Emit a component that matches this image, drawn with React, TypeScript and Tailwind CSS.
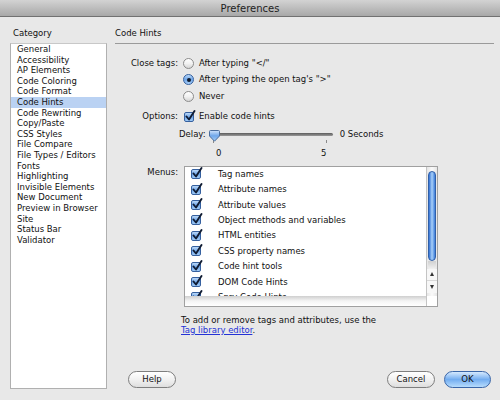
import React from "react";

const categories = [
  "General",
  "Accessibility",
  "AP Elements",
  "Code Coloring",
  "Code Format",
  "Code Hints",
  "Code Rewriting",
  "Copy/Paste",
  "CSS Styles",
  "File Compare",
  "File Types / Editors",
  "Fonts",
  "Highlighting",
  "Invisible Elements",
  "New Document",
  "Preview in Browser",
  "Site",
  "Status Bar",
  "Validator",
];

const menus = [
  "Tag names",
  "Attribute names",
  "Attribute values",
  "Object methods and variables",
  "HTML entities",
  "CSS property names",
  "Code hint tools",
  "DOM Code Hints",
  "Spry Code Hints",
];

function Radio({ on }: { on?: boolean }) {
  if (on) {
    return (
      <div className="w-[11px] h-[11px] rounded-full border border-[#35609f] bg-gradient-to-b from-[#b9d8f8] via-[#6ea5e8] to-[#a9d0f8] flex items-center justify-center shrink-0">
        <div className="w-[4px] h-[4px] rounded-full bg-[#111a2a]" />
      </div>
    );
  }
  return (
    <div className="w-[11px] h-[11px] rounded-full border border-[#8c8c8c] bg-gradient-to-b from-[#ffffff] via-[#f2f2f2] to-[#d6d6d6] shrink-0" />
  );
}

function Check() {
  return (
    <div className="relative w-[10px] h-[10px] rounded-[2px] border border-[#35609f] bg-gradient-to-b from-[#bcd9f8] via-[#6ea5e8] to-[#9fcaf6] shrink-0">
      <svg
        className="absolute left-[0px] top-[-3px]"
        width="11"
        height="12"
        viewBox="0 0 11 12"
      >
        <path
          d="M1.5 6.5 L4 9.5 L9.5 1"
          fill="none"
          stroke="#101c33"
          strokeWidth="1.9"
          strokeLinecap="round"
          strokeLinejoin="round"
        />
      </svg>
    </div>
  );
}

function AquaButton({
  label,
  blue,
  w,
}: {
  label: string;
  blue?: boolean;
  w: string;
}) {
  return (
    <div
      className={
        (blue
          ? "border-[#3a66a8] bg-gradient-to-b from-[#d5e9fd] via-[#73adf0] to-[#b7dcfc] "
          : "border-[#7e7e7e] bg-gradient-to-b from-[#ffffff] via-[#f1f1f1] to-[#dedede] ") +
        w +
        " h-[17px] rounded-full border flex items-center justify-center text-[#111]"
      }
    >
      {label}
    </div>
  );
}

export default function App() {
  return (
    <div className="w-[500px] h-[400px] bg-[#e8e8e8] flex flex-col overflow-hidden font-['DejaVu_Sans',sans-serif] text-[8.5px] text-[#111]">
      {/* Title bar */}
      <div className="h-[17px] shrink-0 bg-gradient-to-b from-[#d3d3d3] to-[#a8a8a8] border-b border-[#717171] flex items-center justify-center text-[10px] text-[#1e1e1e]">
        Preferences
      </div>

      <div className="flex flex-1 min-h-0">
        {/* Category column */}
        <div className="w-[107px] shrink-0 pl-[10px] pt-[10px] pb-[11px] flex flex-col">
          <div className="h-[16px] pl-[3px] leading-[12px]">Category</div>
          <div className="flex-1 bg-white border border-[#b0b0b0] border-t-[#c8c8c8]">
            {categories.map((c) => (
              <div
                key={c}
                className={
                  (c === "Code Hints" ? "bg-[#bad2f3] " : "") +
                  "h-[10.6px] leading-[10.6px] pl-[6px] whitespace-nowrap"
                }
              >
                {c}
              </div>
            ))}
          </div>
        </div>

        {/* Right pane */}
        <div className="flex-1 pl-[8px] pr-[6px] pt-[10px] pb-[12px] flex flex-col">
          <div className="h-[17px] leading-[12px] border-b border-[#9a9a9a]">
            Code Hints
          </div>

          {/* Close tags */}
          <div className="mt-[11px] flex">
            <div className="w-[63px] text-right h-[16.5px] leading-[16.5px]">
              Close tags:
            </div>
            <div className="ml-[5px] flex flex-col">
              <div className="h-[16.5px] flex items-center gap-[5px]">
                <Radio />
                <span>After typing "&lt;/"</span>
              </div>
              <div className="h-[16.5px] flex items-center gap-[5px]">
                <Radio on />
                <span>After typing the open tag's "&gt;"</span>
              </div>
              <div className="h-[16.5px] flex items-center gap-[5px]">
                <Radio />
                <span>Never</span>
              </div>
            </div>
          </div>

          {/* Options */}
          <div className="mt-[4px] h-[16px] flex items-center">
            <div className="w-[63px] text-right">Options:</div>
            <div className="ml-[6px] flex items-center gap-[5px]">
              <Check />
              <span>Enable code hints</span>
            </div>
          </div>

          {/* Delay */}
          <div className="mt-[2px] h-[16px] flex items-center">
            <div className="w-[64px] shrink-0" />
            <span>Delay:</span>
            <div className="relative ml-[3px] w-[124px] h-[16px]">
              <div className="absolute left-[4px] right-0 top-[6px] h-[3px] rounded-full bg-gradient-to-b from-[#5c5c5c] to-[#9a9a9a]" />
              <div className="absolute left-[4px] top-[13px] w-[1px] h-[3px] bg-[#8a8a8a]" />
              <div className="absolute left-[117px] top-[13px] w-[1px] h-[3px] bg-[#8a8a8a]" />
              <svg
                className="absolute left-[0px] top-[3px]"
                width="11"
                height="12"
                viewBox="0 0 11 12"
              >
                <defs>
                  <linearGradient id="kn" x1="0" y1="0" x2="0" y2="1">
                    <stop offset="0" stopColor="#cfe3fb" />
                    <stop offset="0.5" stopColor="#6fa7ea" />
                    <stop offset="1" stopColor="#a6cff7" />
                  </linearGradient>
                </defs>
                <path
                  d="M1.5 0.5 H9.5 Q10.5 0.5 10.5 1.5 V6 L5.5 11.2 L0.5 6 V1.5 Q0.5 0.5 1.5 0.5 Z"
                  fill="url(#kn)"
                  stroke="#4a6d9c"
                  strokeWidth="1"
                />
              </svg>
            </div>
            <span className="ml-[7px]">0 Seconds</span>
          </div>

          {/* Tick labels */}
          <div className="mt-[4px] h-[12px] leading-[12px] relative">
            <span className="absolute left-[101px]">0</span>
            <span className="absolute left-[206px]">5</span>
          </div>

          {/* Menus */}
          <div className="mt-[7px] flex">
            <div className="w-[63px] text-right pt-[1px] leading-[10px]">
              Menus:
            </div>
            <div className="ml-[6px] w-[254px] h-[141px] border border-[#a0a0a0] bg-white flex">
              <div className="flex-1 flex flex-col min-w-0">
                <div className="h-[129px] overflow-hidden">
                  {menus.map((m) => (
                    <div
                      key={m}
                      className="h-[15.4px] flex items-center pl-[6px] whitespace-nowrap"
                    >
                      <Check />
                      <span className="ml-[17px]">{m}</span>
                    </div>
                  ))}
                </div>
                <div className="flex-1 bg-gradient-to-b from-[#cfcfcf] via-[#f4f4f4] to-white" />
              </div>
              {/* Scrollbar */}
              <div className="w-[11px] shrink-0 border-l border-[#c4c4c4] flex flex-col">
                <div className="h-[129px] bg-gradient-to-r from-[#e6e6e6] via-[#fafafa] to-[#e6e6e6] flex flex-col">
                  <div className="h-[4px]" />
                  <div className="mx-[1px] h-[90px] rounded-full border border-[#2f5fa8] bg-gradient-to-r from-[#2f6fd3] via-[#a9d0f8] to-[#3a7bd9]" />
                  <div className="mx-[1px] h-[8px] rounded-b-full bg-gradient-to-b from-[#d0d0d0] to-[#f0f0f0]" />
                  <div className="h-[12px] flex items-center justify-center border-b border-[#d8d8d8] bg-[#f7f7f7]">
                    <div className="w-0 h-0 border-l-[2.5px] border-r-[2.5px] border-b-[4px] border-l-transparent border-r-transparent border-b-[#333]" />
                  </div>
                  <div className="h-[12px] flex items-center justify-center bg-[#f7f7f7]">
                    <div className="w-0 h-0 border-l-[2.5px] border-r-[2.5px] border-t-[4px] border-l-transparent border-r-transparent border-t-[#333]" />
                  </div>
                </div>
                <div className="flex-1 bg-white" />
              </div>
            </div>
          </div>

          {/* Note */}
          <div className="mt-[8px] ml-[66px] leading-[10.5px]">
            <div>To add or remove tags and attributes, use the</div>
            <div>
              <span className="text-[#2433d6] underline">Tag library editor</span>.
            </div>
          </div>

          <div className="flex-1" />

          {/* Buttons */}
          <div className="flex items-center">
            <div className="ml-[13px]">
              <AquaButton label="Help" w="w-[48px]" />
            </div>
            <div className="flex-1" />
            <AquaButton label="Cancel" w="w-[48px]" />
            <div className="ml-[9px] mr-[3px]">
              <AquaButton label="OK" blue w="w-[47px]" />
            </div>
          </div>
        </div>
      </div>
    </div>
  );
}
